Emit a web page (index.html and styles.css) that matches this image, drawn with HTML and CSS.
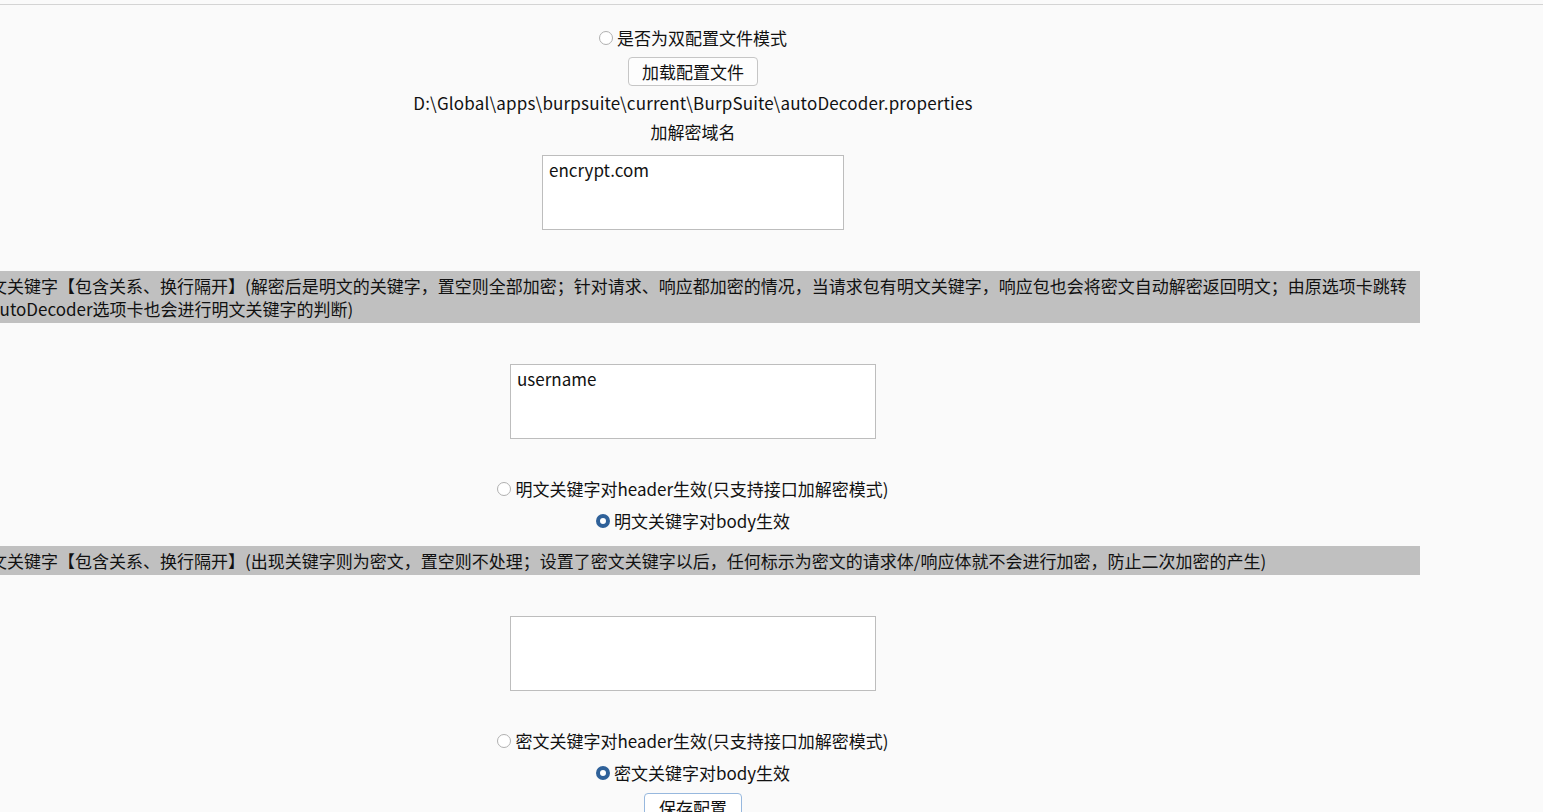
FILE: index.html
```html
<!DOCTYPE html>
<html lang="zh-CN">
<head>
<meta charset="utf-8">
<title>autoDecoder</title>
<link rel="stylesheet" href="styles.css">
</head>
<body>
<div class="topline"></div>
<div class="panel">
  <label class="radio-row first"><input type="radio" class="radio"><span>是否为双配置文件模式</span></label>
  <button class="btn load">加载配置文件</button>
  <div class="text-row path">D:\Global\apps\burpsuite\current\BurpSuite\autoDecoder.properties</div>
  <div class="text-row label">加解密域名</div>
  <textarea class="box domain">encrypt.com</textarea>

  <div class="bar bar-plain">明文关键字【包含关系、换行隔开】(解密后是明文的关键字，置空则全部加密；针对请求、响应都加密的情况，当请求包有明文关键字，响应包也会将密文自动解密返回明文；由原选项卡跳转到autoDecoder选项卡也会进行明文关键字的判断)</div>
  <textarea class="box wide">username</textarea>
  <label class="radio-row header"><input type="radio" class="radio" name="p"><span>明文关键字对header生效(只支持接口加解密模式)</span></label>
  <label class="radio-row body"><input type="radio" class="radio" name="p" checked><span>明文关键字对body生效</span></label>

  <div class="bar bar-cipher">密文关键字【包含关系、换行隔开】(出现关键字则为密文，置空则不处理；设置了密文关键字以后，任何标示为密文的请求体/响应体就不会进行加密，防止二次加密的产生)</div>
  <textarea class="box wide cipher"></textarea>
  <label class="radio-row header"><input type="radio" class="radio" name="c"><span>密文关键字对header生效(只支持接口加解密模式)</span></label>
  <label class="radio-row body"><input type="radio" class="radio" name="c" checked><span>密文关键字对body生效</span></label>
  <button class="btn save">保存配置</button>
</div>
</body>
</html>
```
FILE: styles.css
```css
html, body {
  margin: 0;
  padding: 0;
  background: #fafafa;
  overflow: hidden;
}
body {
  font-family: "Noto Sans CJK SC", "Noto Sans", sans-serif;
  font-size: 17px;
  color: #111;
}
.topline {
  margin-top: 4px;
  border-top: 1px solid #d4d4d4;
}
.panel {
  width: 1454px;
  margin-left: -34px;
  display: flex;
  flex-direction: column;
  align-items: center;
}
.text-row {
  line-height: 24px;
  height: 24px;
  white-space: nowrap;
}
.radio-row {
  display: flex;
  align-items: center;
  gap: 4px;
  height: 24px;
  line-height: 24px;
  white-space: nowrap;
}
.radio-row.first { margin-top: 21px; }
.radio-row.header { margin-top: 38px; }
.radio-row.body { margin-top: 8px; }
.radio {
  appearance: none;
  -webkit-appearance: none;
  margin: 0;
  width: 14px;
  height: 14px;
  border-radius: 50%;
  border: 1px solid #b0b0b0;
  background: #fff;
  box-sizing: border-box;
}
.radio:checked {
  border: 4.5px solid #2f6199;
  background: #fff;
}
.btn {
  font-family: inherit;
  font-size: 17px;
  color: #111;
  height: 29px;
  padding: 0 13px;
  background: #fdfdfd;
  border: 1px solid #c6c6c6;
  border-radius: 4px;
  line-height: 26px;
  box-sizing: border-box;
}
.btn.load { margin-top: 7px; }
.btn.save {
  margin-top: 8px;
  padding: 0 14px;
  border-color: #97b8de;
  background: #fff;
}
.path {
  margin-top: 5px;
  letter-spacing: 0.17px;
}
.label { margin-top: 5px; }
.box {
  font-family: inherit;
  font-size: 17px;
  color: #111;
  background: #fff;
  border: 1px solid #bdbdbd;
  border-radius: 0;
  box-sizing: border-box;
  height: 75px;
  padding: 2px 6px;
  line-height: 24px;
  resize: none;
  outline: none;
  margin: 0;
}
.domain {
  width: 302px;
  margin-top: 11px;
}
.wide {
  width: 366px;
  margin-top: 41px;
}
.bar {
  align-self: stretch;
  background: #c0c0c0;
  padding: 3px 0 3px 7px;
  line-height: 23px;
  text-align: left;
  margin-top: 41px;
}
.bar-cipher { margin-top: 13px; }
```
